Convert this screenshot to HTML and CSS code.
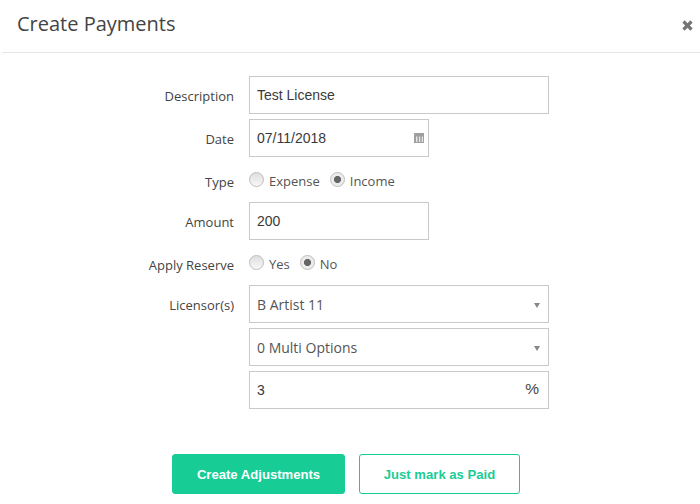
FILE: index.html
```html
<!DOCTYPE html>
<html lang="en">
<head>
<meta charset="utf-8">
<title>Create Payments</title>
<link rel="stylesheet" href="styles.css">
</head>
<body>
<div class="modal">
  <header class="head">
    <h1 class="title">Create Payments</h1>
    <svg class="close" viewBox="0 0 10 10" width="11" height="11"><path d="M2.4 0.3 5 2.9 7.6 0.3 9.7 2.4 7.1 5 9.7 7.6 7.6 9.7 5 7.1 2.4 9.7 0.3 7.6 2.9 5 0.3 2.4Z" fill="#757575"/></svg>
  </header>
  <form class="form">
    <label class="label">Description</label>
    <div class="field"><input class="box wide" type="text" value="Test License"></div>

    <label class="label">Date</label>
    <div class="field">
      <div class="box narrow with-icon">
        <span>07/11/2018</span>
        <svg class="cal" viewBox="0 0 10 10" width="10" height="10"><path d="M0 0H10V10H0Z" fill="#a0a0a0"/><path d="M2 3.5H3.4V9H2ZM5 3.5H6.2V9H5ZM7.8 3.5H9V9H7.8Z" fill="#e8e8e8"/></svg>
      </div>
    </div>

    <label class="label">Type</label>
    <div class="field radios">
      <span class="opt"><input class="radio" type="radio" name="type">Expense</span>
      <span class="opt"><input class="radio" type="radio" name="type" checked>Income</span>
    </div>

    <label class="label">Amount</label>
    <div class="field"><input class="box narrow" type="text" value="200"></div>

    <label class="label">Apply Reserve</label>
    <div class="field radios">
      <span class="opt"><input class="radio" type="radio" name="res">Yes</span>
      <span class="opt"><input class="radio" type="radio" name="res" checked>No</span>
    </div>

    <label class="label">Licensor(s)</label>
    <div class="field stack">
      <div class="box wide with-icon select"><span>B Artist 11</span><i class="caret"></i></div>
      <div class="box wide with-icon select"><span>0 Multi Options</span><i class="caret"></i></div>
      <div class="box wide with-icon"><span>3</span><span class="pct">%</span></div>
    </div>
  </form>
  <div class="actions">
    <button class="btn primary" type="button">Create Adjustments</button>
    <button class="btn ghost" type="button">Just mark as Paid</button>
  </div>
</div>
</body>
</html>
```
FILE: styles.css
```css
* { box-sizing: border-box; }
html, body { margin: 0; padding: 0; background: #fff; }
body { width: 700px; height: 504px; overflow: hidden; font-family: "Open Sans", sans-serif; color: #444; }

.modal { width: 700px; }

.head {
  height: 53px;
  margin-left: 2px;
  padding: 0 7px 0 15px;
  border-bottom: 1px solid #e5e5e5;
  display: flex;
  align-items: center;
  justify-content: space-between;
}
.title { margin: 0 0 5px; font-size: 20px; font-weight: 400; line-height: 27px; color: #444; }
.close { margin-bottom: 2px; }

.form {
  display: grid;
  grid-template-columns: 234px 300px;
  column-gap: 15px;
  row-gap: 5px;
  padding-top: 23px;
}
.label {
  font-size: 13px;
  line-height: 17px;
  text-align: right;
  color: #444;
  padding-top: 12px;
}
.field { min-width: 0; }
.box {
  display: flex;
  align-items: center;
  justify-content: space-between;
  height: 38px;
  border: 1px solid #c9c9c9;
  background: #fff;
  padding: 0 7px;
  font-family: "Liberation Sans", Arial, sans-serif;
  font-size: 14px;
  color: #3a3a3a;
  outline: none;
}
.select { font-family: "Open Sans", sans-serif; color: #555; }
.wide { width: 300px; }
.narrow { width: 180px; }
.with-icon { padding-right: 4px; }

.radios { display: flex; align-items: flex-start; height: 35px; padding-top: 11px; font-size: 13px; line-height: 17px; color: #555; }
.opt { display: inline-flex; align-items: center; margin-right: 10px; }
.radio {
  appearance: none;
  -webkit-appearance: none;
  margin: -4px 5px 0 0;
  width: 15px;
  height: 15px;
  border-radius: 50%;
  border: 1px solid #bdbdbd;
  background: linear-gradient(#dedede, #f8f8f8);
  flex: none;
}
.radio:checked {
  background: radial-gradient(circle, #666 0 3.2px, #ececec 3.9px);
}

.stack { display: flex; flex-direction: column; gap: 5px; }
.caret {
  width: 0; height: 0;
  margin: 2px 4px 0 0;
  border-left: 3.5px solid transparent;
  border-right: 3.5px solid transparent;
  border-top: 5px solid #888;
}
.pct { font-size: 15.5px; margin: 0 5px 3px 0; color: #444; }

.actions { display: flex; gap: 14px; padding: 45px 0 0 172px; }
.btn {
  height: 40px;
  border-radius: 3px;
  font-family: "Liberation Sans", Arial, sans-serif;
  font-size: 13.1px;
  font-weight: 700;
  padding: 0;
}
.primary { width: 173px; background: #18cc96; border: 1px solid #18cc96; color: #fff; }
.ghost { width: 161px; background: #fff; border: 1px solid #18cc96; color: #18cc96; }
```
